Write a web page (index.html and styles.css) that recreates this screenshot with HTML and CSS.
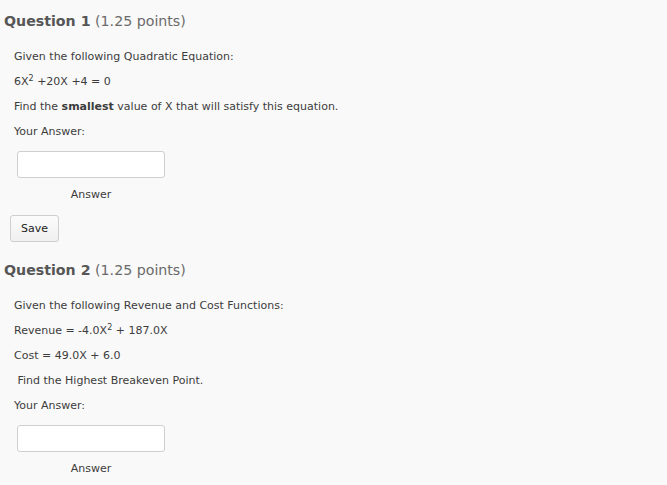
FILE: index.html
```html
<!DOCTYPE html>
<html>
<head>
<meta charset="utf-8">
<link rel="stylesheet" href="styles.css">
</head>
<body>
<div class="page">
  <section class="question">
    <h2 class="qtitle"><strong>Question 1</strong> (1.25 points)</h2>
    <div class="qbody">
      <p>Given the following Quadratic Equation:</p>
      <p>6X<sup>2</sup> +20X +4 = 0</p>
      <p>Find the <strong>smallest</strong> value of X that will satisfy this equation.</p>
      <p>Your Answer:</p>
      <div class="answer">
        <input type="text" class="answer-input">
        <div class="answer-label">Answer</div>
      </div>
    </div>
    <div class="actions"><button class="save">Save</button></div>
  </section>
  <section class="question q2">
    <h2 class="qtitle"><strong>Question 2</strong> (1.25 points)</h2>
    <div class="qbody">
      <p>Given the following Revenue and Cost Functions:</p>
      <p>Revenue = -4.0X<sup>2</sup> + 187.0X</p>
      <p>Cost = 49.0X + 6.0</p>
      <p class="indent">&nbsp;Find the Highest Breakeven Point.</p>
      <p>Your Answer:</p>
      <div class="answer">
        <input type="text" class="answer-input">
        <div class="answer-label">Answer</div>
      </div>
    </div>
  </section>
</div>
</body>
</html>
```

FILE: styles.css
```css
html, body {
  margin: 0;
  padding: 0;
  background: #f9f9f9;
}
body {
  font-family: "DejaVu Sans", Verdana, sans-serif;
  color: #3c3c3c;
}
.page {
  padding: 12px 0 0 4px;
}
.qtitle {
  margin: 0;
  font-size: 14.2px;
  line-height: 18px;
  font-weight: normal;
  color: #6b6b6b;
}
.qtitle strong {
  font-weight: bold;
  color: #565656;
}
.qbody {
  padding: 19px 0 0 10px;
  display: flex;
  flex-direction: column;
}
.qbody p {
  margin: 0 0 10px 0;
  font-size: 11px;
  line-height: 15px;
}
.qbody p:last-of-type {
  margin-bottom: 12px;
}
.qbody sup {
  font-size: 8px;
  line-height: 0;
  vertical-align: 4px;
}
.answer {
  margin-left: 3px;
  width: 148px;
  display: flex;
  flex-direction: column;
}
.answer-input {
  box-sizing: border-box;
  width: 148px;
  height: 27px;
  margin: 0;
  border: 1px solid #cfcfcf;
  border-radius: 3px;
  background: #fff;
}
.answer-label {
  margin-top: 9px;
  text-align: center;
  font-size: 11px;
  line-height: 15px;
  color: #3c3c3c;
}
.actions {
  padding: 13px 0 0 6px;
}
.save {
  box-sizing: border-box;
  width: 49px;
  height: 27px;
  margin: 0;
  padding: 0;
  font-family: "DejaVu Sans", Verdana, sans-serif;
  font-size: 11px;
  color: #222;
  border: 1px solid #cfcfcf;
  border-radius: 3px;
  background: linear-gradient(#fbfbfb, #f0f0f0);
}
.q2 {
  padding-top: 19px;
}
```
